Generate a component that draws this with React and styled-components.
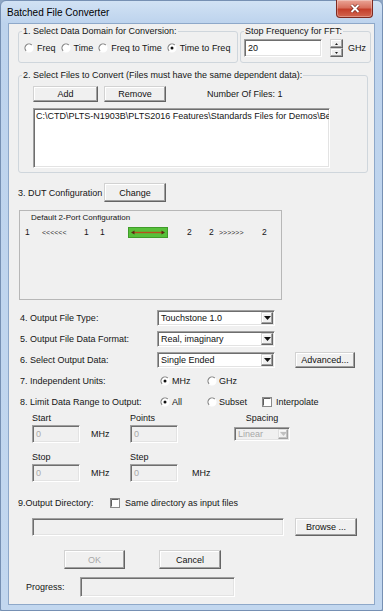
import React from 'react'
import styled, { createGlobalStyle, css } from 'styled-components'

const GlobalStyle = createGlobalStyle`
  html, body { margin: 0; padding: 0; background: #8fa7c4; }
  body {
    font-family: "Liberation Sans", Arial, sans-serif;
    font-size: 9px;
    color: #151515;
  }
  * { box-sizing: border-box; }
`

// classic 3d borders
const raised = css`
  border: 1px solid;
  border-color: #d2d2d2 #646464 #646464 #d2d2d2;
  box-shadow: inset -1px -1px 0 #a0a0a0, inset 1px 1px 0 #fff;
  background: #f0f0f0;
`
const sunken = css`
  border: 1px solid;
  border-color: #a0a0a0 #fff #fff #a0a0a0;
  box-shadow: inset 1px 1px 0 #6e6e6e, inset -1px -1px 0 #e3e3e3;
`

const Window = styled.div`
  width: 383px;
  height: 611px;
  display: flex;
  flex-direction: column;
  padding: 0 7px 5px 7px;
  border: 1px solid #7690b3;
  border-radius: 6px 6px 2px 2px;
  background: linear-gradient(180deg, #d1e2f4 0px, #bdd3ed 22px, #c2d7ef 100%);
`
const TitleBar = styled.div`
  height: 22px;
  flex: none;
  display: flex;
  align-items: center;
  justify-content: space-between;
`
const Title = styled.div`
  font-size: 10px;
  color: #000;
  margin-left: -1px;
`
const CloseButton = styled.div`
  align-self: flex-start;
  margin: -1px 2px 0 0;
  width: 37px;
  height: 18px;
  border: 1px solid #7e2a20;
  border-top: none;
  border-radius: 0 0 4px 4px;
  background: linear-gradient(180deg, #eba597 0%, #d8705e 45%, #c43f2b 55%, #d26650 100%);
  box-shadow: inset 0 0 0 1px rgba(255, 255, 255, 0.3);
  display: flex;
  align-items: center;
  justify-content: center;
`
const Client = styled.div`
  flex: 1;
  min-height: 0;
  display: flex;
  flex-direction: column;
  align-items: flex-start;
  background: #f0f0f0;
  border: 1px solid #8ea8c9;
  padding: 0 6px 0 9px;
`
const TopRow = styled.div`
  align-self: stretch;
  display: flex;
  gap: 2px;
  margin-top: 7px;
  flex: none;
`
// group box: the title sits on the top border
const GroupBox = styled.section`
  margin-top: ${p => p.$mt || '0'};
  padding: 0 4px 0 3px;
  border: 1px solid #cfd6dc;
  border-radius: 3px;
  width: ${p => p.$w || 'auto'};
  height: ${p => p.$h};
  flex: ${p => (p.$grow ? '1' : 'none')};
  align-self: stretch;
`
const GroupTitle = styled.div`
  width: fit-content;
  margin-top: -6px;
  padding: 0 1px;
  line-height: 11px;
  background: #f0f0f0;
  white-space: nowrap;
`
const DomainRow = styled.div`
  display: flex;
  align-items: center;
  gap: 5px;
  height: 12px;
  margin: 5px 0 0 2px;
`
const RadioLabel = styled.label`
  display: inline-flex;
  align-items: center;
  gap: ${p => p.$gap || '3px'};
  white-space: nowrap;
  line-height: 12px;
`
const FftRow = styled.div`
  display: flex;
  align-items: center;
  height: 18px;
  margin-top: 2px;
`
const TextBox = styled.div`
  ${sunken};
  width: ${p => p.$w};
  height: ${p => p.$h || '18px'};
  background: ${p => (p.$disabled ? '#f0f0f0' : '#fff')};
  color: ${p => (p.$disabled ? '#a8a8a8' : '#111')};
  padding: 0 3px;
  display: flex;
  align-items: center;
  flex: none;
  line-height: 11px;
`
const Spinner = styled.div`
  display: flex;
  flex-direction: column;
  width: 13px;
  height: 18px;
  margin: 0 5px 0 8px;
`
const SpinHalf = styled.div`
  ${raised};
  flex: 1;
  display: flex;
  align-items: center;
  justify-content: center;
`
const ButtonRow = styled.div`
  display: flex;
  align-items: center;
  gap: ${p => p.$gap || '6px'};
  margin: ${p => p.$m || '0'};
  flex: none;
`
const Button = styled.button`
  ${raised};
  width: ${p => p.$w};
  height: ${p => p.$h || '17px'};
  padding: 0;
  font: inherit;
  font-size: 9px;
  color: ${p => (p.disabled ? '#a8a8a8' : '#111')};
  flex: none;
`
const Note = styled.span`
  margin-left: ${p => p.$ml || '0'};
  white-space: nowrap;
`
const FileList = styled.div`
  ${sunken};
  background: #fff;
  width: 297px;
  height: 60px;
  margin: 6px 0 0 11px;
  padding: 2px 2px;
  white-space: nowrap;
  overflow: hidden;
  line-height: 11px;
`
const DutRow = styled.div`
  display: flex;
  align-items: center;
  height: 19px;
  flex: none;
  margin-top: 10px;
`
const FixedLabel = styled.span`
  width: ${p => p.$w};
  margin-left: ${p => p.$ml || '0'};
  flex: none;
  white-space: nowrap;
`
const DutBox = styled.div`
  width: 263px;
  height: 90px;
  flex: none;
  margin: 8px 0 0 1px;
  border: 1px solid #b7b7b7;
  padding-top: 2px;
`
const DutCaption = styled.div`
  font-size: 8px;
  line-height: 10px;
  margin-left: 11px;
`
const PortRow = styled.div`
  display: grid;
  grid-template-columns: 17px 42px 16px 28px 59px 22px 10px 43px auto;
  align-items: center;
  height: 12px;
  margin-top: 3px;
  padding-left: 5px;
  font-size: 8.5px;
`
const Chevrons = styled.span`
  font-size: 7px;
  color: #333;
`
const SettingsGrid = styled.div`
  display: grid;
  grid-template-columns: 137px 118px auto;
  grid-auto-rows: 16px;
  row-gap: 5px;
  align-items: center;
  flex: none;
  margin: 10px 0 0 2px;
  white-space: nowrap;
`
const Combo = styled.div`
  ${sunken};
  width: ${p => p.$w || '118px'};
  height: ${p => p.$h || '16px'};
  background: ${p => (p.$disabled ? '#f0f0f0' : '#fff')};
  color: ${p => (p.$disabled ? '#a8a8a8' : '#111')};
  display: flex;
  align-items: center;
  padding: 1px 1px 1px 3px;
  align-self: center;
`
const ComboText = styled.span`
  flex: 1;
  line-height: 11px;
`
const ComboButton = styled.span`
  ${raised};
  width: ${p => (p.$small ? '10px' : '12px')};
  height: 100%;
  display: flex;
  align-items: center;
  justify-content: center;
  opacity: ${p => (p.$disabled ? 0.55 : 1)};
`
const Options = styled.div`
  grid-column: 2 / 4;
  display: grid;
  grid-template-columns: 47px 55px auto;
  align-items: center;
  padding-left: 3px;
`
const SubsetGrid = styled.div`
  display: grid;
  grid-template-columns: 59px 39px 62px 42px 56px;
  grid-template-rows: 10px 18px 17px 18px;
  row-gap: 2px;
  align-items: center;
  flex: none;
  margin: 3px 0 0 14px;
  line-height: 10px;
`
const Cell = styled.div`
  grid-column: ${p => p.$col};
  grid-row: ${p => p.$row};
  align-self: ${p => p.$align || 'center'};
  justify-self: ${p => p.$justify || 'start'};
  white-space: nowrap;
`
const CheckRow = styled.div`
  display: flex;
  align-items: center;
  height: 12px;
  flex: none;
  margin-top: 15px;
`
const ProgressBox = styled.div`
  ${sunken};
  width: 155px;
  height: 20px;
  background: #f0f0f0;
`

const RadioIcon = ({ checked }) => (
  <svg width="10" height="10" viewBox="0 0 10 10">
    <circle cx="5" cy="5" r="4" fill="#fff" />
    <path d="M2.17 7.83 A4 4 0 0 1 7.83 2.17" stroke="#7a7a7a" strokeWidth="1.1" fill="none" />
    <path d="M7.83 2.17 A4 4 0 0 1 2.17 7.83" stroke="#fff" strokeWidth="1.1" fill="none" />
    {checked && <circle cx="5" cy="5" r="1.5" fill="#111" />}
  </svg>
)

const Radio = ({ label, checked, gap }) => (
  <RadioLabel $gap={gap}>
    <RadioIcon checked={checked} />
    {label}
  </RadioLabel>
)

const CheckIcon = () => (
  <svg width="10" height="10" viewBox="0 0 10 10">
    <rect x="0.5" y="0.5" width="9" height="9" fill="#fff" stroke="#8a8a8a" />
    <path d="M1.5 8.5 V1.5 H8.5" stroke="#5e5e5e" fill="none" />
  </svg>
)

const Arrow = ({ color = '#111' }) => (
  <svg width="7" height="4" viewBox="0 0 7 4">
    <path d="M0 0 H7 L3.5 4 Z" fill={color} />
  </svg>
)

const TinyArrow = ({ down }) => (
  <svg width="3" height="2" viewBox="0 0 3 2">
    <path d={down ? 'M0 0 H3 L1.5 2 Z' : 'M0 2 H3 L1.5 0 Z'} fill="#222" />
  </svg>
)

const Select = ({ value, width, height, disabled, small }) => (
  <Combo $w={width} $h={height} $disabled={disabled}>
    <ComboText>{value}</ComboText>
    <ComboButton $small={small} $disabled={disabled}>
      <Arrow color={disabled ? '#9a9a9a' : '#111'} />
    </ComboButton>
  </Combo>
)

const Connector = () => (
  <svg width="40" height="11" viewBox="0 0 40 11">
    <rect x="0.5" y="0.5" width="39" height="10" fill="#57c03a" stroke="#3f9c29" />
    <line x1="5" y1="5.5" x2="35" y2="5.5" stroke="#b8501d" strokeWidth="1.4" />
    <path d="M3 5.5 L6.5 3.5 V7.5 Z" fill="#5a2a10" />
    <path d="M37 5.5 L33.5 3.5 V7.5 Z" fill="#5a2a10" />
  </svg>
)

const domains = ['Freq', 'Time', 'Freq to Time', 'Time to Freq']

export default function App() {
  return (
    <>
      <GlobalStyle />
      <Window>
        <TitleBar>
          <Title>Batched File Converter</Title>
          <CloseButton>
            <svg width="10" height="9" viewBox="0 0 10 9">
              <path d="M1.5 1 L8.5 8 M8.5 1 L1.5 8" stroke="#6d1f15" strokeWidth="3.2" />
              <path d="M1.5 1 L8.5 8 M8.5 1 L1.5 8" stroke="#fff" strokeWidth="2" />
            </svg>
          </CloseButton>
        </TitleBar>
        <Client>
          <TopRow>
            <GroupBox $w="220px" $h="32px">
              <GroupTitle>1. Select Data Domain for Conversion:</GroupTitle>
              <DomainRow>
                {domains.map(d => (
                  <Radio key={d} label={d} checked={d === 'Time to Freq'} />
                ))}
              </DomainRow>
            </GroupBox>
            <GroupBox $grow $h="32px">
              <GroupTitle>Stop Frequency for FFT:</GroupTitle>
              <FftRow>
                <TextBox $w="78px">20</TextBox>
                <Spinner>
                  <SpinHalf><TinyArrow /></SpinHalf>
                  <SpinHalf><TinyArrow down /></SpinHalf>
                </Spinner>
                <span>GHz</span>
              </FftRow>
            </GroupBox>
          </TopRow>

          <GroupBox $mt="12px" $h="98px">
            <GroupTitle>2. Select Files to Convert (Files must have the same dependent data):</GroupTitle>
            <ButtonRow $m="5px 0 0 11px">
              <Button $w="65px" $h="16px">Add</Button>
              <Button $w="62px" $h="16px">Remove</Button>
              <Note $ml="35px">Number Of Files: 1</Note>
            </ButtonRow>
            <FileList>C:\CTD\PLTS-N1903B\PLTS2016 Features\Standards Files for Demos\Beatty Standard.s2p</FileList>
          </GroupBox>

          <DutRow>
            <FixedLabel $w="86px">3. DUT Configuration</FixedLabel>
            <Button $w="62px" $h="19px">Change</Button>
          </DutRow>
          <DutBox>
            <DutCaption>Default 2-Port Configuration</DutCaption>
            <PortRow>
              <span>1</span>
              <Chevrons>&lt;&lt;&lt;&lt;&lt;&lt;</Chevrons>
              <span>1</span>
              <span>1</span>
              <Connector />
              <span>2</span>
              <span>2</span>
              <Chevrons>&gt;&gt;&gt;&gt;&gt;&gt;</Chevrons>
              <span>2</span>
            </PortRow>
          </DutBox>

          <SettingsGrid>
            <span>4. Output File Type:</span>
            <Select value="Touchstone 1.0" />
            <span />
            <span>5. Output File Data Format:</span>
            <Select value="Real, imaginary" />
            <span />
            <span>6. Select Output Data:</span>
            <Select value="Single Ended" />
            <ButtonRow $m="0 0 0 20px">
              <Button $w="60px" $h="16px">Advanced...</Button>
            </ButtonRow>
            <span>7. Independent Units:</span>
            <Options>
              <Radio label="MHz" checked gap="2px" />
              <Radio label="GHz" gap="2px" />
            </Options>
            <span>8. Limit Data Range to Output:</span>
            <Options>
              <Radio label="All" checked gap="2px" />
              <Radio label="Subset" gap="2px" />
              <RadioLabel $gap="4px"><CheckIcon />Interpolate</RadioLabel>
            </Options>
          </SettingsGrid>

          <SubsetGrid>
            <Cell $col="1" $row="1">Start</Cell>
            <Cell $col="3" $row="1">Points</Cell>
            <Cell $col="5" $row="1" $justify="center">Spacing</Cell>
            <Cell $col="1" $row="2"><TextBox $w="48px" $disabled>0</TextBox></Cell>
            <Cell $col="2" $row="2">MHz</Cell>
            <Cell $col="3" $row="2"><TextBox $w="48px" $disabled>0</TextBox></Cell>
            <Cell $col="5" $row="2"><Select value="Linear" width="56px" height="14px" disabled small /></Cell>
            <Cell $col="1" $row="3" $align="end">Stop</Cell>
            <Cell $col="3" $row="3" $align="end">Step</Cell>
            <Cell $col="1" $row="4"><TextBox $w="48px" $disabled>0</TextBox></Cell>
            <Cell $col="2" $row="4">MHz</Cell>
            <Cell $col="3" $row="4"><TextBox $w="48px" $disabled>0</TextBox></Cell>
            <Cell $col="4" $row="4">MHz</Cell>
          </SubsetGrid>

          <CheckRow>
            <FixedLabel $w="92px">9.Output Directory:</FixedLabel>
            <RadioLabel $gap="5px"><CheckIcon />Same directory as input files</RadioLabel>
          </CheckRow>
          <ButtonRow $gap="11px" $m="9px 0 0 14px">
            <TextBox $w="252px" $disabled />
            <Button $w="62px" $h="18px">Browse ...</Button>
          </ButtonRow>
          <ButtonRow $gap="34px" $m="14px 0 0 46px">
            <Button $w="61px" $h="19px" disabled>OK</Button>
            <Button $w="62px" $h="19px">Cancel</Button>
          </ButtonRow>
          <ButtonRow $gap="0" $m="8px 0 0 0">
            <FixedLabel $w="54px" $ml="8px">Progress:</FixedLabel>
            <ProgressBox />
          </ButtonRow>
        </Client>
      </Window>
    </>
  )
}
